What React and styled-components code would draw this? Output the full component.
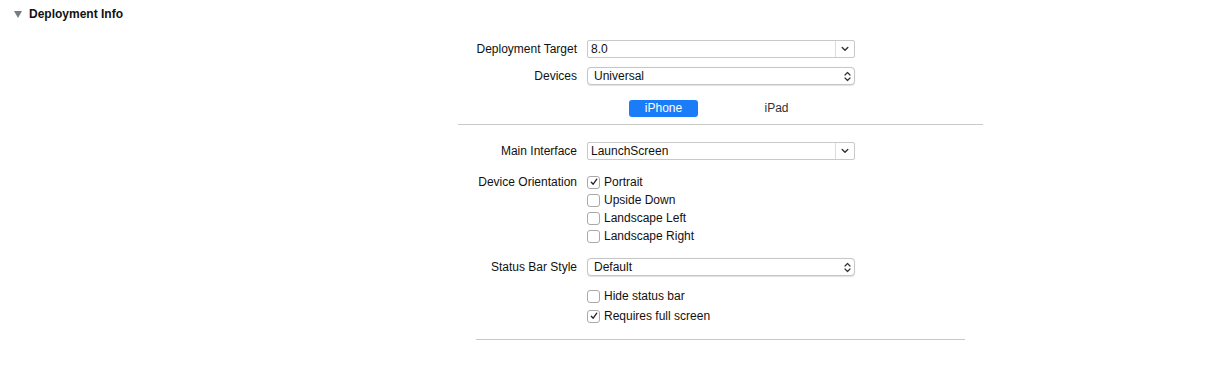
import styled, { createGlobalStyle } from "styled-components";

const GlobalStyle = createGlobalStyle`
    body {
        margin: 0;
        background: #ffffff;
        font-family: "Liberation Sans", Arial, sans-serif;
        font-size: 12px;
        color: #1a1a1a;
    }
`;

const Page = styled.div`
    width: 1221px;
    height: 385px;
    background: #ffffff;
`;

const Header = styled.div`
    display: flex;
    align-items: center;
    gap: 7px;
    padding: 6px 0 0 14px;
    height: 16px;

    h3 {
        margin: 0;
        font-size: 12px;
        font-weight: 700;
        color: #111;
    }
`;

const Disclosure = styled.span`
    width: 0;
    height: 0;
    border-left: 4px solid transparent;
    border-right: 4px solid transparent;
    border-top: 7px solid #7c7c7c;
`;

const Form = styled.div`
    margin: 18px 0 0 458px;
    width: 525px;
`;

const Row = styled.div`
    display: grid;
    grid-template-columns: 119px 268px;
    column-gap: 10px;
    align-items: ${(p) => (p.$top ? "start" : "center")};
    margin-top: ${(p) => p.$mt || 0}px;
`;

const Label = styled.div`
    text-align: right;
    color: #111;
    line-height: 18px;
    white-space: nowrap;
`;

const Combo = styled.div`
    display: flex;
    height: 16px;
    border: 1px solid #c9c9c9;
    border-radius: 2px;
    background: #fff;

    span {
        flex: 1;
        padding-left: 3px;
        line-height: 16px;
        color: #111;
    }
    i {
        width: 18px;
        border-left: 1px solid #dcdcdc;
        display: flex;
        align-items: center;
        justify-content: center;
    }
`;

const Popup = styled.div`
    display: flex;
    align-items: center;
    height: 16px;
    width: 266px;
    border: 1px solid #c6c6c6;
    border-radius: 4px;
    background: #fff;
    box-shadow: 0 0.5px 1px rgba(0, 0, 0, 0.12);

    span {
        flex: 1;
        padding-left: 6px;
        line-height: 16px;
        color: #111;
    }
    i {
        width: 14px;
        display: flex;
        align-items: center;
        justify-content: center;
    }
`;

const Segments = styled.div`
    display: flex;
    align-items: center;
    margin: 15px 0 0 171px;
    height: 17px;
`;

const Segment = styled.div`
    width: ${(p) => p.$w}px;
    margin-left: ${(p) => p.$ml || 0}px;
    height: 17px;
    line-height: 17px;
    text-align: center;
    border-radius: 3px;
    background: ${(p) => (p.$active ? "#1b7cf8" : "transparent")};
    color: ${(p) => (p.$active ? "#ffffff" : "#333")};
`;

const Separator = styled.div`
    height: 1px;
    background: #c9c9c9;
    margin: ${(p) => p.$mt}px 0 0 ${(p) => p.$ml || 0}px;
    width: ${(p) => p.$w}px;
`;

const CheckList = styled.div`
    display: flex;
    flex-direction: column;
`;

const CheckRow = styled.label`
    display: flex;
    align-items: center;
    gap: 4px;
    height: ${(p) => p.$h || 18}px;
    color: #111;
`;

const Box = styled.span`
    width: 11px;
    height: 11px;
    border: 1px solid #a9a9a9;
    border-radius: 3px;
    background: #fff;
    display: flex;
    align-items: center;
    justify-content: center;
`;

const ChevronDown = () => (
    <svg width="8" height="6" viewBox="0 0 8 6">
        <path d="M1.2 1.6 L4 4.3 L6.8 1.6" fill="none" stroke="#333" strokeWidth="1.4" strokeLinecap="round" strokeLinejoin="round" />
    </svg>
);

const ChevronUpDown = () => (
    <svg width="7" height="11" viewBox="0 0 7 11">
        <path d="M1 4 L3.5 1.5 L6 4 M1 7 L3.5 9.5 L6 7" fill="none" stroke="#333" strokeWidth="1.2" strokeLinecap="round" strokeLinejoin="round" />
    </svg>
);

const Check = ({ checked, text, h }) => (
    <CheckRow $h={h}>
        <Box>
            {checked && (
                <svg width="8" height="8" viewBox="0 0 8 8">
                    <path d="M1.3 4.2 L3.2 6.2 L6.8 1.2" fill="none" stroke="#222" strokeWidth="1.3" strokeLinecap="round" strokeLinejoin="round" />
                </svg>
            )}
        </Box>
        {text}
    </CheckRow>
);

const App = () => {
    const orientations = [
        { text: "Portrait", checked: true },
        { text: "Upside Down", checked: false },
        { text: "Landscape Left", checked: false },
        { text: "Landscape Right", checked: false },
    ];

    return (
        <Page>
            <GlobalStyle />
            <Header>
                <Disclosure />
                <h3>Deployment Info</h3>
            </Header>
            <Form>
                <Row>
                    <Label>Deployment Target</Label>
                    <Combo>
                        <span>8.0</span>
                        <i><ChevronDown /></i>
                    </Combo>
                </Row>
                <Row $mt={9}>
                    <Label>Devices</Label>
                    <Popup>
                        <span>Universal</span>
                        <i><ChevronUpDown /></i>
                    </Popup>
                </Row>
                <Segments>
                    <Segment $w={69} $active>iPhone</Segment>
                    <Segment $w={69} $ml={44}>iPad</Segment>
                </Segments>
                <Separator $mt={7} $w={525} />
                <Row $mt={17}>
                    <Label>Main Interface</Label>
                    <Combo>
                        <span>LaunchScreen</span>
                        <i><ChevronDown /></i>
                    </Combo>
                </Row>
                <Row $mt={13} $top>
                    <Label>Device Orientation</Label>
                    <CheckList>
                        {orientations.map((o) => (
                            <Check key={o.text} text={o.text} checked={o.checked} />
                        ))}
                    </CheckList>
                </Row>
                <Row $mt={13}>
                    <Label>Status Bar Style</Label>
                    <Popup>
                        <span>Default</span>
                        <i><ChevronUpDown /></i>
                    </Popup>
                </Row>
                <Row $mt={10}>
                    <div />
                    <CheckList>
                        <Check text="Hide status bar" h={20} />
                        <Check text="Requires full screen" checked h={20} />
                    </CheckList>
                </Row>
                <Separator $mt={13} $ml={18} $w={489} />
            </Form>
        </Page>
    );
};

export default App;
